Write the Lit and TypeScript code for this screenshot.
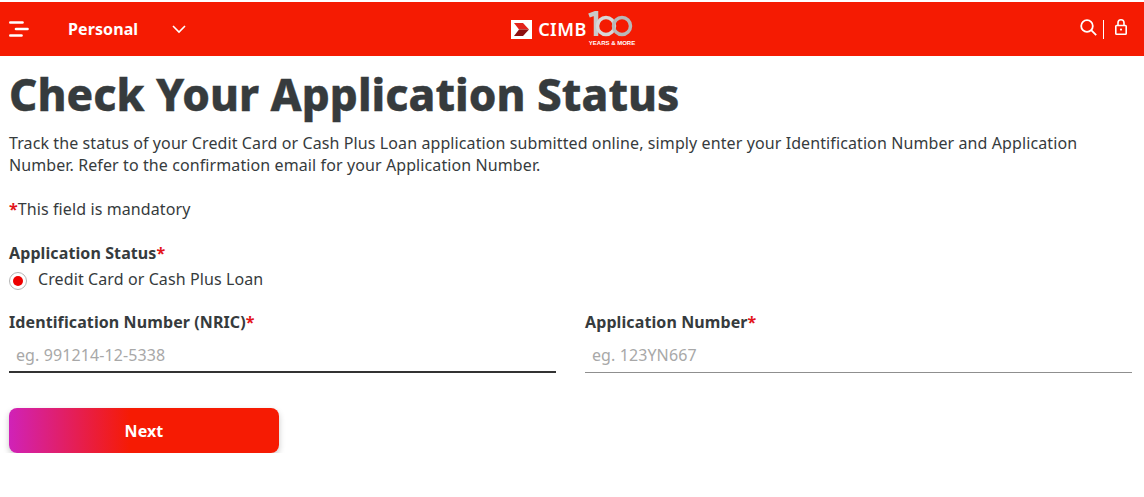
import { LitElement, html, css } from "lit";
import { customElement } from "lit/decorators.js";

@customElement("app-root")
export class AppRoot extends LitElement {
  static styles = css`
    :host {
      display: block;
      font-family: "Noto Sans", sans-serif;
      color: #363b3d;
      letter-spacing: 0.1px;
    }
    .top {
      margin-top: 2px;
      height: 54px;
      background: #f51b02;
      display: grid;
      grid-template-columns: 1fr auto 1fr;
      align-items: center;
      padding: 0 9px;
      color: #fff;
    }
    .left {
      display: flex;
      align-items: center;
    }
    .personal {
      font-weight: 700;
      font-size: 16px;
      margin-left: 39px;
      margin-right: 33px;
    }
    .logo {
      display: flex;
      align-items: center;
      font-size: 18px;
      font-weight: 600;
      letter-spacing: 0.5px;
    }
    .flag {
      margin-right: 6px;
    }
    .hundred {
      position: relative;
      display: flex;
    }
    .years {
      position: absolute;
      left: 2px;
      bottom: 0;
      font-family: "Liberation Sans", sans-serif;
      font-size: 6px;
      line-height: 7px;
      font-weight: 700;
      letter-spacing: 0;
      white-space: nowrap;
    }
    .right {
      display: flex;
      align-items: center;
      justify-content: flex-end;
      padding-right: 8px;
    }
    .right svg {
      margin-bottom: 4px;
    }
    .sep {
      width: 1px;
      height: 19px;
      background: #fff;
      margin: 0 11px 0 6px;
    }
    main {
      padding: 0 12px 0 9px;
    }
    h1 {
      margin: 10px 0 0;
      font-size: 44px;
      line-height: 56px;
      font-weight: 800;
      letter-spacing: 0.04px;
      -webkit-text-stroke: 0.4px #363b3d;
    }
    .intro {
      margin: 10px 0 0;
      max-width: 1090px;
      font-size: 16px;
      line-height: 22px;
    }
    .mand {
      margin: 22px 0 0;
      font-size: 16px;
      line-height: 22px;
    }
    .req {
      color: #e3141a;
      font-weight: 700;
    }
    .label {
      font-size: 16px;
      font-weight: 700;
      line-height: 22px;
    }
    .status {
      margin-top: 22px;
    }
    .radio {
      display: flex;
      align-items: center;
      gap: 11px;
      font-size: 16px;
      line-height: 22px;
      margin-top: 4px;
    }
    .dot {
      width: 18px;
      height: 18px;
      margin-top: 3px;
      box-sizing: border-box;
      border: 1px solid #b5b5b5;
      border-radius: 50%;
      display: flex;
      align-items: center;
      justify-content: center;
    }
    .dot i {
      width: 10px;
      height: 10px;
      background: #ee0000;
      border-radius: 50%;
    }
    .fields {
      display: grid;
      grid-template-columns: 547px 547px;
      column-gap: 29px;
      margin-top: 21px;
    }
    .input {
      margin-top: 7px;
      height: 33px;
      padding: 0 7px 3px;
      box-sizing: border-box;
      display: flex;
      align-items: center;
      color: #a8a8a8;
      font-size: 16px;
      border-bottom: 1px solid #8f8f8f;
    }
    .input.active {
      padding-bottom: 2px;
      border-bottom: 2px solid #333;
    }
    button {
      margin-top: 35px;
      width: 270px;
      height: 45px;
      border: 0;
      border-radius: 8px;
      background: linear-gradient(90deg, #d022b8 0%, #f61b03 45%);
      color: #fff;
      font: 700 16px "Noto Sans", sans-serif;
      letter-spacing: 0.1px;
      box-shadow: 0 3px 6px rgba(0, 0, 0, 0.22);
    }
  `;

  render() {
    return html`
      <header class="top">
        <div class="left">
          <svg width="20" height="16" viewBox="0 0 20 16" stroke="#fff" stroke-width="2.6" stroke-linecap="round">
            <path d="M1.3 1.5H13.5" />
            <path d="M7 8H18.5" />
            <path d="M1.3 14.5H12.5" />
          </svg>
          <span class="personal">Personal</span>
          <svg width="16" height="10" viewBox="0 0 16 10" fill="none" stroke="#fff" stroke-width="1.6">
            <path d="M2 2l6 6 6-6" />
          </svg>
        </div>
        <div class="logo">
          <svg class="flag" width="21" height="19" viewBox="0 0 21 19">
            <rect width="21" height="19" fill="#fff" />
            <path d="M3 3h9l6 6.5H8z" fill="#e3241c" />
            <path d="M8 9.5h10l-6 6.5H3z" fill="#8e1010" />
          </svg>
          <span>CIMB</span>
          <div class="hundred">
            <svg width="46" height="36" viewBox="0 0 46 36" fill="none">
              <path d="M2 4.5l7-2.5v23" stroke="#c9c9c9" stroke-width="4.5" />
              <circle cx="19" cy="15" r="8.5" stroke="#d8d8d8" stroke-width="3.5" />
              <circle cx="35" cy="15" r="8.5" stroke="#b8b8b8" stroke-width="3.5" />
            </svg>
            <span class="years">YEARS &amp; MORE</span>
          </div>
        </div>
        <div class="right">
          <svg width="17" height="17" viewBox="0 0 17 17" fill="none" stroke="#fff" stroke-width="1.8">
            <circle cx="7" cy="7" r="5.8" />
            <path d="M11.2 11.2l5 5" />
          </svg>
          <span class="sep"></span>
          <svg width="12" height="16" viewBox="0 0 12 16" fill="none" stroke="#fff" stroke-width="1.6">
            <rect x="0.8" y="6.5" width="10.4" height="8.7" rx="0.8" />
            <path d="M3 6.5V3.8a3 3 0 016 0V6.5" />
            <circle cx="6" cy="10.6" r="1.1" fill="#fff" stroke="none" />
          </svg>
        </div>
      </header>
      <main>
        <h1>Check Your Application Status</h1>
        <p class="intro">
          Track the status of your Credit Card or Cash Plus Loan application submitted online, simply enter your
          Identification Number and Application Number. Refer to the confirmation email for your Application Number.
        </p>
        <p class="mand"><span class="req">*</span>This field is mandatory</p>
        <div class="label status">Application Status<span class="req">*</span></div>
        <div class="radio"><span class="dot"><i></i></span>Credit Card or Cash Plus Loan</div>
        <div class="fields">
          <div>
            <div class="label">Identification Number (NRIC)<span class="req">*</span></div>
            <div class="input active">eg. 991214-12-5338</div>
          </div>
          <div>
            <div class="label">Application Number<span class="req">*</span></div>
            <div class="input">eg. 123YN667</div>
          </div>
        </div>
        <button>Next</button>
      </main>
    `;
  }
}
